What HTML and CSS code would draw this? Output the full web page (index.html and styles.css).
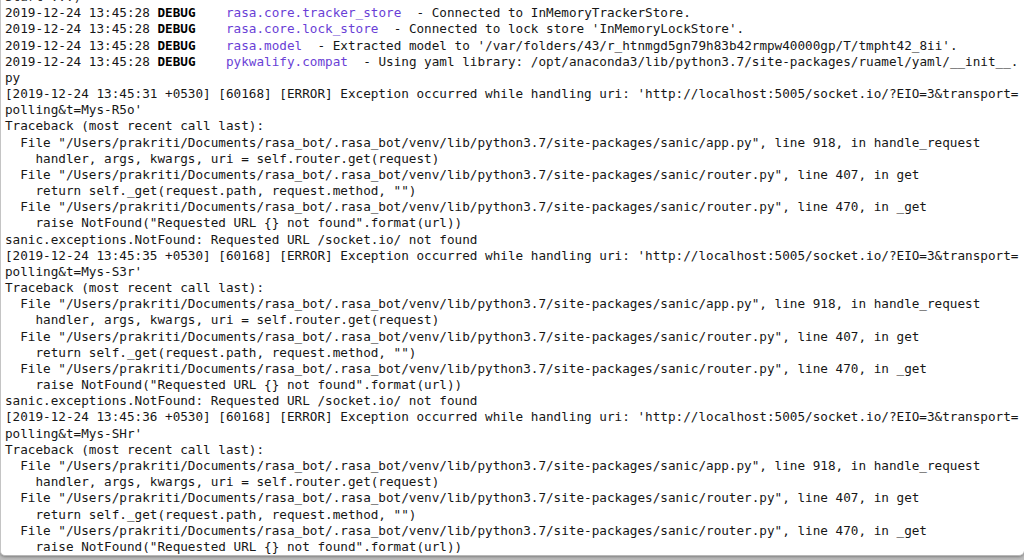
FILE: index.html
```html
<!DOCTYPE html>
<html lang="en">
<head>
<meta charset="utf-8">
<title>Terminal</title>
<link rel="stylesheet" href="styles.css">
</head>
<body>
<div class="screen">
  <div class="window">
    <div class="log">
      <div class="ln faint">Start ...)</div>
      <div class="ln">2019-12-24 13:45:28 <b>DEBUG</b>    <span class="name">rasa.core.tracker_store</span>  - Connected to InMemoryTrackerStore.</div>
      <div class="ln">2019-12-24 13:45:28 <b>DEBUG</b>    <span class="name">rasa.core.lock_store</span>  - Connected to lock store 'InMemoryLockStore'.</div>
      <div class="ln">2019-12-24 13:45:28 <b>DEBUG</b>    <span class="name">rasa.model</span>  - Extracted model to '/var/folders/43/r_htnmgd5gn79h83b42rmpw40000gp/T/tmpht42_8ii'.</div>
      <div class="ln">2019-12-24 13:45:28 <b>DEBUG</b>    <span class="name">pykwalify.compat</span>  - Using yaml library: /opt/anaconda3/lib/python3.7/site-packages/ruamel/yaml/__init__.</div>
      <div class="ln">py</div>
      <div class="ln">[2019-12-24 13:45:31 +0530] [60168] [ERROR] Exception occurred while handling uri: 'http://localhost:5005/socket.io/?EIO=3&amp;transport=</div>
      <div class="ln">polling&amp;t=Mys-R5o'</div>
      <div class="ln">Traceback (most recent call last):</div>
      <div class="ln">  File "/Users/prakriti/Documents/rasa_bot/.rasa_bot/venv/lib/python3.7/site-packages/sanic/app.py", line 918, in handle_request</div>
      <div class="ln">    handler, args, kwargs, uri = self.router.get(request)</div>
      <div class="ln">  File "/Users/prakriti/Documents/rasa_bot/.rasa_bot/venv/lib/python3.7/site-packages/sanic/router.py", line 407, in get</div>
      <div class="ln">    return self._get(request.path, request.method, "")</div>
      <div class="ln">  File "/Users/prakriti/Documents/rasa_bot/.rasa_bot/venv/lib/python3.7/site-packages/sanic/router.py", line 470, in _get</div>
      <div class="ln">    raise NotFound("Requested URL {} not found".format(url))</div>
      <div class="ln">sanic.exceptions.NotFound: Requested URL /socket.io/ not found</div>
      <div class="ln">[2019-12-24 13:45:35 +0530] [60168] [ERROR] Exception occurred while handling uri: 'http://localhost:5005/socket.io/?EIO=3&amp;transport=</div>
      <div class="ln">polling&amp;t=Mys-S3r'</div>
      <div class="ln">Traceback (most recent call last):</div>
      <div class="ln">  File "/Users/prakriti/Documents/rasa_bot/.rasa_bot/venv/lib/python3.7/site-packages/sanic/app.py", line 918, in handle_request</div>
      <div class="ln">    handler, args, kwargs, uri = self.router.get(request)</div>
      <div class="ln">  File "/Users/prakriti/Documents/rasa_bot/.rasa_bot/venv/lib/python3.7/site-packages/sanic/router.py", line 407, in get</div>
      <div class="ln">    return self._get(request.path, request.method, "")</div>
      <div class="ln">  File "/Users/prakriti/Documents/rasa_bot/.rasa_bot/venv/lib/python3.7/site-packages/sanic/router.py", line 470, in _get</div>
      <div class="ln">    raise NotFound("Requested URL {} not found".format(url))</div>
      <div class="ln">sanic.exceptions.NotFound: Requested URL /socket.io/ not found</div>
      <div class="ln">[2019-12-24 13:45:36 +0530] [60168] [ERROR] Exception occurred while handling uri: 'http://localhost:5005/socket.io/?EIO=3&amp;transport=</div>
      <div class="ln">polling&amp;t=Mys-SHr'</div>
      <div class="ln">Traceback (most recent call last):</div>
      <div class="ln">  File "/Users/prakriti/Documents/rasa_bot/.rasa_bot/venv/lib/python3.7/site-packages/sanic/app.py", line 918, in handle_request</div>
      <div class="ln">    handler, args, kwargs, uri = self.router.get(request)</div>
      <div class="ln">  File "/Users/prakriti/Documents/rasa_bot/.rasa_bot/venv/lib/python3.7/site-packages/sanic/router.py", line 407, in get</div>
      <div class="ln">    return self._get(request.path, request.method, "")</div>
      <div class="ln">  File "/Users/prakriti/Documents/rasa_bot/.rasa_bot/venv/lib/python3.7/site-packages/sanic/router.py", line 470, in _get</div>
      <div class="ln">    raise NotFound("Requested URL {} not found".format(url))</div>
    </div>
  </div>
</div>
</body>
</html>
```

FILE: styles.css
```css
html, body {
  margin: 0;
  padding: 0;
  background: #d9d9d9;
}

.screen {
  width: 1024px;
  height: 560px;
  overflow: hidden;
  background: linear-gradient(#e6e6e6, #bdbdbd);
}

.window {
  height: 555px;
  overflow: hidden;
  background: #ffffff;
  border-left: 1px solid #c4c4c4;
  border-bottom: 1px solid #b8b8b8;
  border-bottom-left-radius: 5px;
  border-bottom-right-radius: 5px;
  box-shadow: 0 1px 3px rgba(0, 0, 0, 0.35);
}

.log {
  margin: -11px 0 0 0;
  padding: 0 0 0 4px;
  font-family: "DejaVu Sans Mono", "Liberation Mono", monospace;
  font-size: 12.66px;
  line-height: 16.18px;
  color: #161616;
}

.ln {
  white-space: pre;
  height: 16.18px;
}

.ln b {
  font-weight: bold;
  color: #000000;
}

.name {
  color: #6a3fd6;
}

.faint {
  color: #333333;
}
```
